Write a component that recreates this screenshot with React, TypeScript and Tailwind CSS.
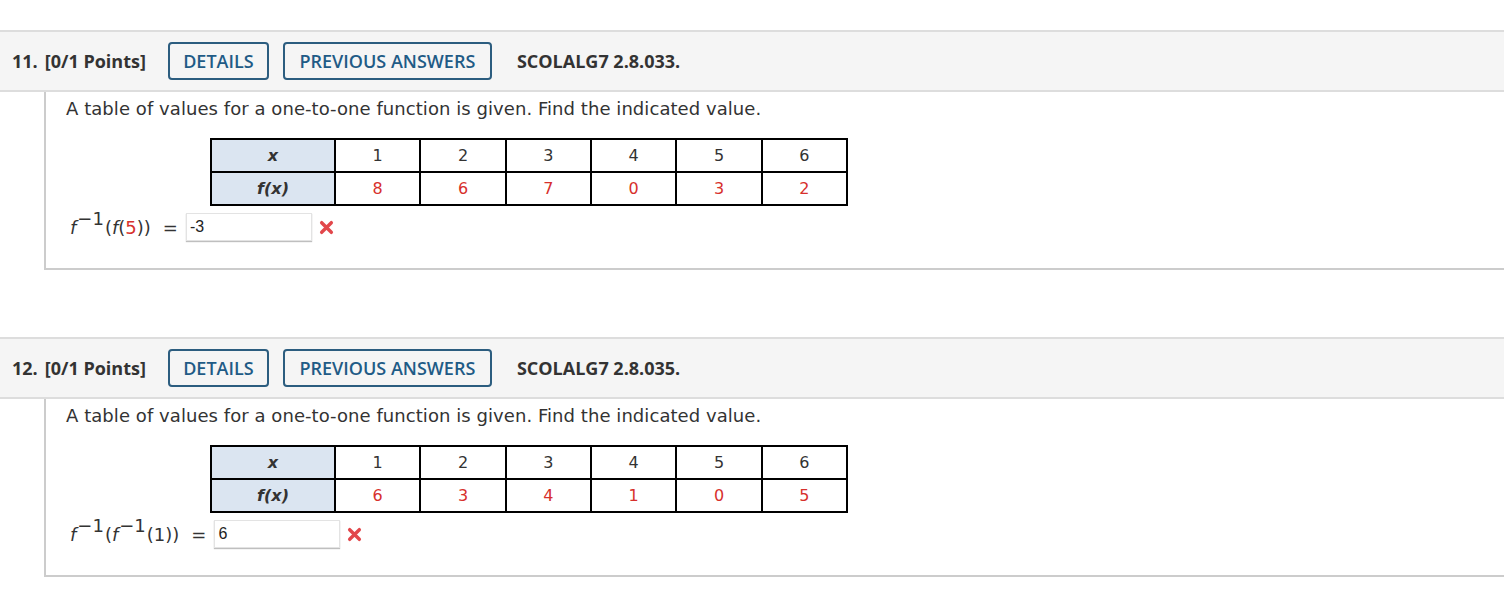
import React from "react";

type Question = {
  num: number;
  code: string;
  values: number[];
  answer: string;
  expr: React.ReactNode;
};

const xs = [1, 2, 3, 4, 5, 6];

function RedX() {
  return (
    <svg width="15" height="15" viewBox="0 0 14 14" className="ml-[7px]">
      <path d="M2.5 2.5 L11.5 11.5 M11.5 2.5 L2.5 11.5" stroke="#e2474b" strokeWidth="3.2" strokeLinecap="round" />
    </svg>
  );
}

function Inv() {
  return (
    <>
      <span className="italic">f</span>
      <span className="text-[18px] relative -top-[9px] ml-[1px] mr-[1px]">−1</span>
    </>
  );
}

function QuestionBlock({ q }: { q: Question }) {
  return (
    <div>
      <div className="h-[62px] bg-[#f5f5f5] border-y-2 border-[#dddddd] flex items-center pl-[12px] font-['Open_Sans',sans-serif] text-[18px]">
        <span className="font-bold text-[#333333] mr-[22px]">
          {q.num}.<span className="ml-[7px]">[0/1 Points]</span>
        </span>
        <button className="w-[101px] h-[38px] border-2 border-[#2c5d7f] rounded-[4px] text-[#1f5b86] font-semibold">
          DETAILS
        </button>
        <button className="ml-[14px] w-[209px] h-[38px] border-2 border-[#2c5d7f] rounded-[4px] text-[#1f5b86] font-semibold">
          PREVIOUS ANSWERS
        </button>
        <span className="ml-[25px] font-bold text-[#333333]">{q.code}</span>
      </div>
      <div className="ml-[44px] h-[178px] border-l-2 border-b-2 border-[#cccccc] pl-[20px] pt-[6px] font-['DejaVu_Sans',sans-serif] text-[18px] text-[#333333]">
        <p className="leading-[22px] tracking-[0.06px]">
          A table of values for a one-to-one function is given. Find the indicated value.
        </p>
        <table className="ml-[144px] mt-[18px] w-[638px] border-collapse border-2 border-black text-[16px]">
          <tbody>
            <tr className="h-[33px]">
              <td className="w-[124px] border-2 border-black bg-[#dbe5f1] text-center font-bold italic">x</td>
              {xs.map((v) => (
                <td key={v} className="border-2 border-black text-center">
                  {v}
                </td>
              ))}
            </tr>
            <tr className="h-[33px]">
              <td className="border-2 border-black bg-[#dbe5f1] text-center font-bold italic">f(x)</td>
              {q.values.map((v, i) => (
                <td key={i} className="border-2 border-black text-center text-[#d7302c]">
                  {v}
                </td>
              ))}
            </tr>
          </tbody>
        </table>
        <div className="flex items-center mt-[7px] ml-[4px] text-[18px]">
          <span className="whitespace-nowrap">{q.expr}</span>
          <span className="ml-[12px]">=</span>
          <div className="ml-[8px] w-[126px] h-[28px] border border-[#e3e3e3] shadow-[0_1px_1px_rgba(0,0,0,0.25)] bg-white flex items-center pl-[3px] font-['Liberation_Sans',sans-serif] text-[16px] text-[#222222]">
            {q.answer}
          </div>
          <RedX />
        </div>
      </div>
    </div>
  );
}

const questions: Question[] = [
  {
    num: 11,
    code: "SCOLALG7 2.8.033.",
    values: [8, 6, 7, 0, 3, 2],
    answer: "-3",
    expr: (
      <>
        <Inv />(<span className="italic">f</span>(<span className="text-[#d7302c]">5</span>))
      </>
    ),
  },
  {
    num: 12,
    code: "SCOLALG7 2.8.035.",
    values: [6, 3, 4, 1, 0, 5],
    answer: "6",
    expr: (
      <>
        <Inv />(<Inv />(1))
      </>
    ),
  },
];

export default function App() {
  return (
    <div className="w-[1504px] h-[612px] bg-white overflow-hidden pt-[30px] flex flex-col gap-[67px]">
      {questions.map((q) => (
        <QuestionBlock key={q.num} q={q} />
      ))}
    </div>
  );
}
